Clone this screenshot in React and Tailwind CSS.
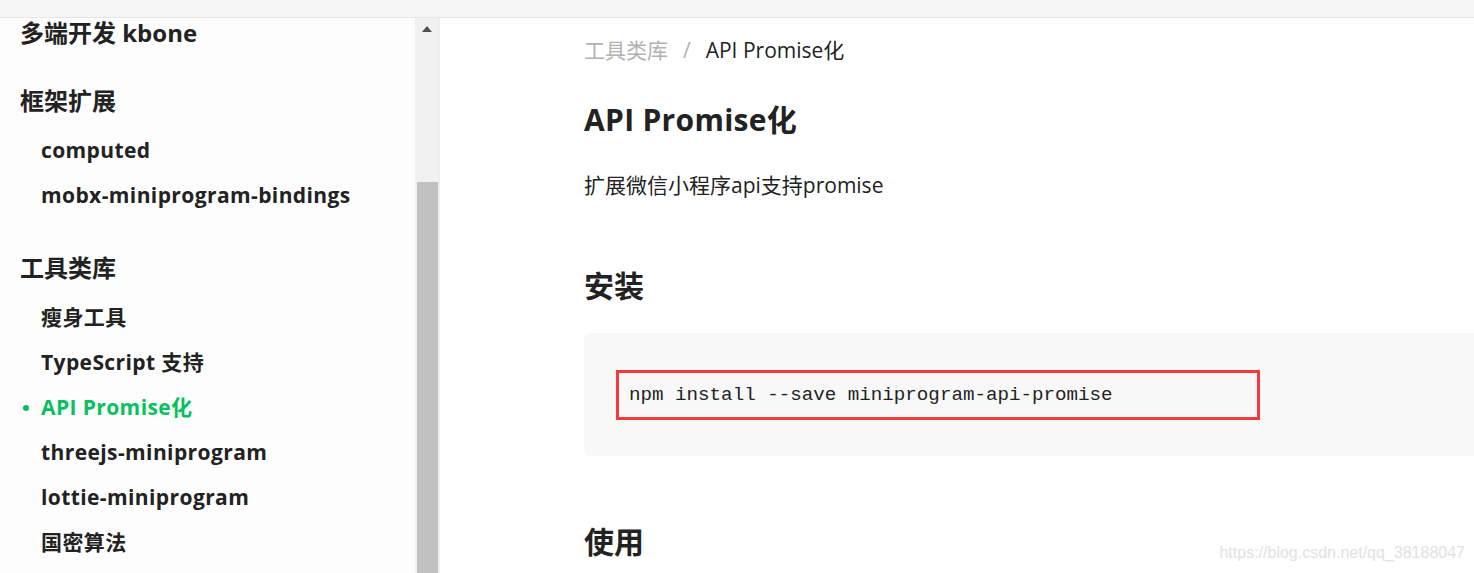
import React from 'react';

const FONT = { fontFamily: '"Open Sans", "Noto Sans CJK SC", sans-serif' };

const groups = [
  {
    title: '框架扩展',
    items: ['computed', 'mobx-miniprogram-bindings'],
  },
  {
    title: '工具类库',
    items: [
      '瘦身工具',
      'TypeScript 支持',
      'API Promise化',
      'threejs-miniprogram',
      'lottie-miniprogram',
      '国密算法',
    ],
    active: 'API Promise化',
  },
];

const Sidebar = () => (
  <aside className="w-[415px] shrink-0 bg-[#fdfdfd] pl-[20px] text-[#222]">
    <div className="h-[30px] leading-[30px] text-[24px] font-bold">多端开发 kbone</div>
    <div className="mt-[28px] space-y-[25px]">
      {groups.map((g) => (
        <div key={g.title}>
          <div className="h-[50px] leading-[50px] text-[24px] font-bold">{g.title}</div>
          <ul className="pt-[2px]">
            {g.items.map((item) => {
              const on = item === g.active;
              return (
                <li
                  key={item}
                  className={`relative h-[45px] leading-[45px] pl-[21px] text-[21px] font-bold tracking-[0.4px] ${on ? 'text-[#07c160]' : ''}`}
                >
                  {on && (
                    <span className="absolute left-[3px] top-[20px] h-[6px] w-[6px] rounded-full bg-[#07c160]" />
                  )}
                  {item}
                </li>
              );
            })}
          </ul>
        </div>
      ))}
    </div>
  </aside>
);

const Scrollbar = () => (
  <div className="relative w-[25px] shrink-0 bg-[#f1f1f1] border-r border-[#ededed]">
    <div className="flex justify-center pt-[8px]">
      <svg width="10" height="6" viewBox="0 0 10 6">
        <path d="M0 6 L5 0 L10 6 Z" fill="#505050" />
      </svg>
    </div>
    <div className="absolute left-[2px] top-[164px] bottom-0 w-[21px] bg-[#c1c1c1]" />
  </div>
);

const Content = () => (
  <main className="flex-1 pl-[144px] pt-[17px] text-[#222]">
    <nav className="h-[30px] leading-[30px] text-[21px] flex items-center">
      <span className="text-[#b2b2b2]">工具类库</span>
      <span className="mx-[15px] text-[#b2b2b2]">/</span>
      <span>API Promise化</span>
    </nav>
    <h1 className="mt-[35px] h-[40px] leading-[40px] text-[30px] font-bold tracking-[0.3px]">API Promise化</h1>
    <p className="mt-[30px] h-[30px] leading-[30px] text-[21px]">扩展微信小程序api支持promise</p>
    <h2 className="mt-[66px] h-[40px] leading-[40px] text-[30px] font-bold">安装</h2>
    <div className="mt-[27px] w-[960px] rounded-[6px] bg-[#f8f8f8] pl-[32px] pt-[37px] pb-[36px]">
      <div className="w-[644px] h-[50px] border-[3px] border-[#f63a3a] pl-[10px] flex items-center">
        <code
          className="text-[19.2px] text-[#222]"
          style={{ fontFamily: '"Liberation Mono", monospace' }}
        >
          npm install --save miniprogram-api-promise
        </code>
      </div>
    </div>
    <h2 className="mt-[66px] h-[40px] leading-[40px] text-[30px] font-bold">使用</h2>
  </main>
);

export default function App() {
  return (
    <div className="relative h-[573px] w-[1474px] overflow-hidden bg-white" style={FONT}>
      <div className="h-[18px] bg-[#f6f6f6] border-b border-[#e6e6e6]" />
      <div className="flex h-[555px]">
        <Sidebar />
        <Scrollbar />
        <Content />
      </div>
      <div
        className="absolute right-[9px] bottom-[8px] text-[16px] text-[#e2e2e2]"
        style={{ fontFamily: '"Liberation Sans", Arial, sans-serif' }}
      >
        https://blog.csdn.net/qq_38188047
      </div>
    </div>
  );
}
